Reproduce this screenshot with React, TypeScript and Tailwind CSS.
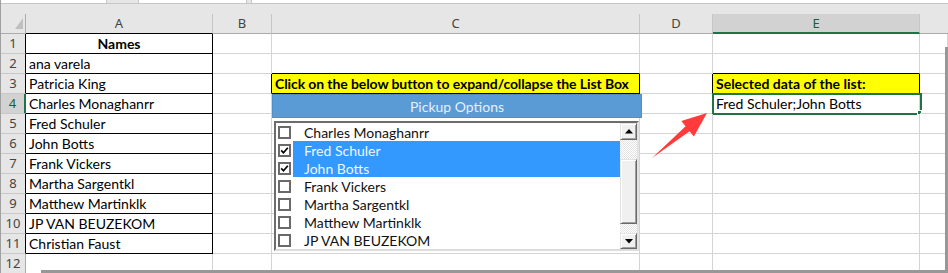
import React from 'react';

// Excel sheet with a checkbox list box (form control) and the output cell.
const NAMES = [
  'ana varela',
  'Patricia King',
  'Charles Monaghanrr',
  'Fred Schuler',
  'John Botts',
  'Frank Vickers',
  'Martha Sargentkl',
  'Matthew Martinklk',
  'JP VAN BEUZEKOM',
  'Christian Faust',
];

const LIST_ITEMS = [
  { label: 'Charles Monaghanrr', checked: false },
  { label: 'Fred Schuler', checked: true },
  { label: 'John Botts', checked: true },
  { label: 'Frank Vickers', checked: false },
  { label: 'Martha Sargentkl', checked: false },
  { label: 'Matthew Martinklk', checked: false },
  { label: 'JP VAN BEUZEKOM', checked: false },
];

const COLS = ['A', 'B', 'C', 'D', 'E', 'F'];
const ROWS = [1, 2, 3, 4, 5, 6, 7, 8, 9, 10, 11, 12];

const GRID = 'grid grid-cols-[25px_187px_59px_368px_73px_207px_1fr]';

const cellBorder = (row: number, col: string): string => {
  const black = 'border-black';
  if (col === 'A' && row <= 11) return `border-r border-b ${black}`;
  if (col === 'B' && row === 3) return 'border-r border-r-black border-b border-b-[#d4d4d4]';
  if (col === 'D' && row === 3) return 'border-r border-r-black border-b border-b-[#d4d4d4]';
  if ((col === 'C' || col === 'E') && row === 2) return 'border-b border-b-black border-r border-r-[#d4d4d4]';
  if ((col === 'C' || col === 'E') && row === 3) return `border-r border-b ${black} bg-[#ffff00]`;
  return 'border-r border-b border-[#d4d4d4]';
};

const cellContent = (row: number, col: string): React.ReactNode => {
  if (col === 'A' && row === 1) return <div className="text-center font-bold">Names</div>;
  if (col === 'A' && row >= 2 && row <= 11) return NAMES[row - 2];
  if (col === 'C' && row === 3)
    return (
      <span className="font-bold tracking-[-0.1px]">Click on the below button to expand/collapse the List Box</span>
    );
  if (col === 'E' && row === 3) return <span className="font-bold">Selected data of the list:</span>;
  if (col === 'E' && row === 4)
    return (
      <>
        Fred Schuler;John Botts
        <div className="absolute -left-[1px] -top-[1px] w-[210px] h-[22px] border-2 border-[#217346]" />
        <div className="absolute -right-[3px] -bottom-[2px] w-[5px] h-[5px] bg-[#217346] border border-white" />
      </>
    );
  return null;
};

const Triangle = ({ down }: { down?: boolean }) => (
  <svg width="8" height="5" viewBox="0 0 8 5">
    <path d={down ? 'M0 0 L8 0 L4 4.5 Z' : 'M0 4.5 L8 4.5 L4 0 Z'} fill="#000" />
  </svg>
);

const ScrollButton = ({ down, h }: { down?: boolean; h: string }) => (
  <div
    className={`${h} flex items-center justify-center bg-[#f0f0f0] border border-t-[#e3e3e3] border-l-[#e3e3e3] border-r-[#696969] border-b-[#696969] shadow-[inset_1px_1px_0_#ffffff,inset_-1px_-1px_0_#a0a0a0]`}
  >
    <Triangle down={down} />
  </div>
);

const Track = ({ h }: { h: string }) => (
  <div className={`${h} bg-[repeating-conic-gradient(#ffffff_0%_25%,#e2e2e2_0%_50%)] bg-[length:2px_2px]`} />
);

const ListBox = () => (
  <div className="absolute left-[273px] top-[121px] w-[365px] h-[130px] bg-white border-2 border-t-[#6d6d6d] border-l-[#6d6d6d] border-r-[#e3e3e3] border-b-[#dcdcdc] flex">
    <div className="flex-1 flex flex-col">
      {LIST_ITEMS.map((item) => (
        <div key={item.label} className="h-[18px] flex items-center">
          <div className="w-[17px] h-full flex items-center pl-[2px]">
            <div className="w-[13px] h-[13px] border-2 border-[#6a6a6a] bg-white flex items-center justify-center">
              {item.checked && (
                <svg width="9" height="9" viewBox="0 0 9 9">
                  <path d="M1.2 4.3 L3.5 6.8 L7.8 1.8" fill="none" stroke="#000" strokeWidth="1.7" />
                </svg>
              )}
            </div>
          </div>
          <div
            className={`flex-1 h-full flex items-center pl-[11px] ${
              item.checked ? 'bg-[#3399ff] text-[#eef6ff]' : 'text-[#111]'
            }`}
          >
            {item.label}
          </div>
        </div>
      ))}
    </div>
    <div className="w-[17px] flex flex-col">
      <ScrollButton h="h-[17px]" />
      <Track h="h-[19px]" />
      <div className="h-[65px] bg-[#f0f0f0] border border-t-[#e3e3e3] border-l-[#e3e3e3] border-r-[#696969] border-b-[#696969] shadow-[inset_1px_1px_0_#ffffff,inset_-1px_-1px_0_#a0a0a0]" />
      <Track h="h-[9px]" />
      <ScrollButton down h="h-[16px]" />
    </div>
  </div>
);

export default function App() {
  return (
    <div className="relative w-[948px] h-[273px] overflow-hidden bg-white border-l border-[#a0a0a0] font-['Lato','Liberation_Sans',sans-serif] text-[14px] text-black">
      {/* ribbon remnants */}
      <div className="h-[3px] flex bg-[#e6e6e6]">
        <div className="w-[106px] bg-white border-r border-[#c6c6c6]" />
        <div className="w-[31px]" />
        <div className="w-[109px] bg-white border-x border-[#c6c6c6]" />
        <div className="w-[4px]" />
        <div className="flex-1 bg-white border-l border-[#c6c6c6]" />
      </div>
      <div className="h-[11px] bg-[#e6e6e6] border-t border-[#c6c6c6]" />

      {/* column headers */}
      <div className={`${GRID} h-[20px] bg-[#e6e6e6] font-['Noto_Sans',sans-serif] text-[13px] text-[#444]`}>
        <div className="relative border-r border-b border-[#ababab]">
          <svg className="absolute left-[14px] top-[4px]" width="9" height="12" viewBox="0 0 9 12">
            <path d="M0 11 L8 11 L8 0 Z" fill="#c0c0c0" />
          </svg>
        </div>
        {COLS.map((c) => (
          <div
            key={c}
            className={`flex items-center justify-center leading-none ${
              c === 'E'
                ? 'bg-[#d2d2d2] border-b-2 border-b-[#217346] border-r border-r-[#c6c6c6] text-[#1e5c38]'
                : c === 'A'
                  ? 'border-r border-r-[#c6c6c6] border-b border-b-black'
                  : c === 'F'
                    ? 'border-b border-b-[#ababab]'
                    : 'border-r border-r-[#c6c6c6] border-b border-b-[#ababab]'
            }`}
          >
            {c === 'F' ? null : c}
          </div>
        ))}
      </div>

      {/* rows */}
      {ROWS.map((r) => (
        <div key={r} className={`${GRID} h-[20px]`}>
          <div
            className={`flex items-center justify-center font-['Noto_Sans',sans-serif] text-[13px] leading-none border-b border-b-[#c8c8c8] ${
              r === 4
                ? 'bg-[#d2d2d2] text-[#1e5c38] border-r-2 border-r-[#217346]'
                : r <= 11
                  ? 'bg-[#e6e6e6] text-[#444] border-r border-r-black'
                  : 'bg-[#e6e6e6] text-[#444] border-r border-r-[#ababab]'
            }`}
          >
            {r}
          </div>
          {COLS.map((c) => (
            <div
              key={c}
              className={`relative px-[3px] leading-[19px] whitespace-nowrap ${cellBorder(r, c)}`}
            >
              {cellContent(r, c)}
            </div>
          ))}
        </div>
      ))}

      {/* form controls over column C */}
      <div className="absolute left-[271px] top-[94px] w-[370px] h-[24px] bg-[#5b9bd5] border border-[#4f8fcb] flex items-center justify-center text-[#e6effa]">
        Pickup Options
      </div>
      <ListBox />

      {/* red arrow */}
      <svg className="absolute left-0 top-0 pointer-events-none" width="948" height="273">
        <polygon
          points="651,158 684.6,126.2 680.3,121.1 706,113 692.9,136.5 688.6,131.3"
          fill="#ff3b3b"
        />
      </svg>

      {/* screenshot shadow */}
      <div className="absolute right-0 top-[47px] bottom-0 w-[3px] bg-[#979797]" />
      <div className="absolute left-[40px] right-0 bottom-0 h-[3px] bg-[#979797]" />
    </div>
  );
}
